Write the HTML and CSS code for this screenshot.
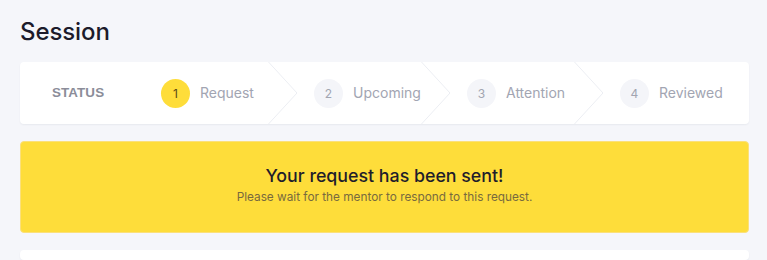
FILE: index.html
```html
<!DOCTYPE html>
<html>
<head>
<meta charset="utf-8">
<link rel="stylesheet" href="styles.css">
</head>
<body>
<div class="page">
  <h1 class="title">Session</h1>
  <div class="card status-card">
    <div class="status-label">STATUS</div>
    <div class="step">
      <span class="num num-active">1</span><span class="step-name">Request</span>
      <svg class="chev" width="32" height="62" viewBox="0 0 32 62"><polyline points="0.5,0 29,31 0.5,62" fill="none" stroke="#eceef3" stroke-width="1"/></svg>
    </div>
    <div class="step">
      <span class="num">2</span><span class="step-name">Upcoming</span>
      <svg class="chev" width="32" height="62" viewBox="0 0 32 62"><polyline points="0.5,0 29,31 0.5,62" fill="none" stroke="#eceef3" stroke-width="1"/></svg>
    </div>
    <div class="step">
      <span class="num">3</span><span class="step-name">Attention</span>
      <svg class="chev" width="32" height="62" viewBox="0 0 32 62"><polyline points="0.5,0 29,31 0.5,62" fill="none" stroke="#eceef3" stroke-width="1"/></svg>
    </div>
    <div class="step">
      <span class="num">4</span><span class="step-name">Reviewed</span>
    </div>
  </div>
  <div class="notice">
    <div class="notice-title">Your request has been sent!</div>
    <div class="notice-sub">Please wait for the mentor to respond to this request.</div>
  </div>
  <div class="card next-card"></div>
</div>
</body>
</html>
```
FILE: styles.css
```css
html, body {
  margin: 0;
  padding: 0;
  background: #f5f6fa;
  font-family: Inter, "Noto Sans", sans-serif;
  overflow: hidden;
}
.page {
  padding: 0 18px 0 20px;
  width: 729px;
  height: 260px;
  overflow: hidden;
}
.title {
  margin: 0;
  padding-top: 17px;
  height: 62px;
  box-sizing: border-box;
  font-size: 24px;
  line-height: 30px;
  font-weight: 500;
  color: #1c1b2b;
  letter-spacing: -0.1px;
}
.card {
  background: #fff;
  border-radius: 4px;
  box-shadow: 0 1px 2px rgba(20, 30, 60, 0.06);
}
.status-card {
  display: flex;
  align-items: center;
  height: 62px;
  overflow: hidden;
}
.status-label {
  width: 96px;
  box-sizing: border-box;
  padding-left: 32px;
  padding-bottom: 2px;
  font-family: "Liberation Sans", Arial, sans-serif;
  font-weight: 700;
  font-size: 13.4px;
  color: #8b8d99;
  letter-spacing: 0.1px;
}
.step {
  position: relative;
  width: 153px;
  height: 62px;
  display: flex;
  align-items: center;
  padding-left: 45px;
  box-sizing: border-box;
  flex-shrink: 0;
}
.num {
  width: 29px;
  height: 29px;
  border-radius: 50%;
  background: #f4f5f9;
  color: #a2a5b1;
  font-size: 12px;
  display: flex;
  align-items: center;
  justify-content: center;
  flex-shrink: 0;
}
.num-active {
  background: #fedd3a;
  color: #5b4a16;
}
.step-name {
  margin-left: 10px;
  margin-bottom: 2px;
  font-size: 14px;
  font-weight: 400;
  color: #a2a5b2;
  white-space: nowrap;
}
.chev {
  position: absolute;
  right: -31px;
  top: 0;
}
.notice {
  margin-top: 17px;
  height: 92px;
  box-sizing: border-box;
  background: #fedd3a;
  border: 1px solid #fbe07a;
  border-radius: 4px;
  text-align: center;
  padding-top: 23px;
}
.notice-title {
  font-size: 17.8px;
  font-weight: 500;
  color: #1f1d2b;
  line-height: 22px;
}
.notice-sub {
  margin-top: 3px;
  font-size: 11.8px;
  color: #786a3e;
  line-height: 14px;
}
.next-card {
  margin-top: 17px;
  height: 10px;
}
```
